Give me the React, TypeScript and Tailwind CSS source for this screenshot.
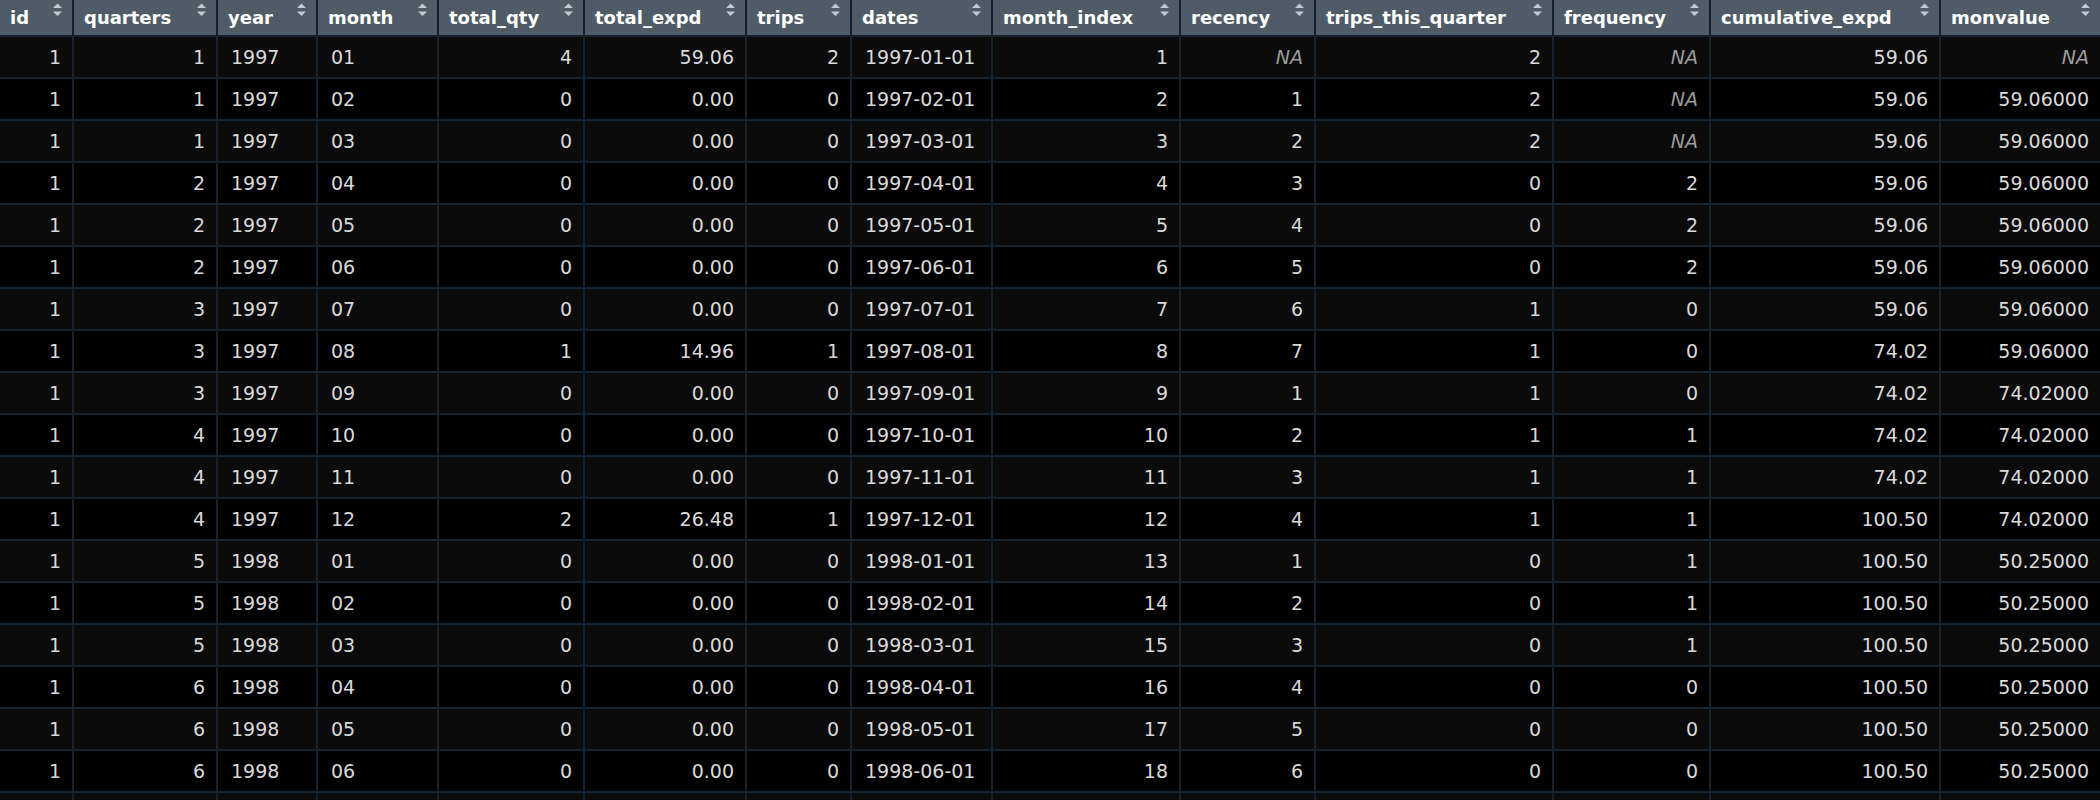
const columns = [
  { key: "id", width: "w-[74px]", align: "right" },
  { key: "quarters", width: "w-[144px]", align: "right" },
  { key: "year", width: "w-[100px]", align: "left" },
  { key: "month", width: "w-[121px]", align: "left" },
  { key: "total_qty", width: "w-[146px]", align: "right" },
  { key: "total_expd", width: "w-[162px]", align: "right" },
  { key: "trips", width: "w-[105px]", align: "right" },
  { key: "dates", width: "w-[141px]", align: "left" },
  { key: "month_index", width: "w-[188px]", align: "right" },
  { key: "recency", width: "w-[135px]", align: "right" },
  { key: "trips_this_quarter", width: "w-[238px]", align: "right" },
  { key: "frequency", width: "w-[157px]", align: "right" },
  { key: "cumulative_expd", width: "w-[230px]", align: "right" },
  { key: "monvalue", width: "w-[159px]", align: "right" },
];

// id, quarters, year, month, qty, expd, trips, month_index, recency, trips_q, freq, cum, monvalue
const raw: (string | number)[][] = [
  [1, 1, 1997, "01", 4, "59.06", 2, 1, "NA", 2, "NA", "59.06", "NA"],
  [1, 1, 1997, "02", 0, "0.00", 0, 2, 1, 2, "NA", "59.06", "59.06000"],
  [1, 1, 1997, "03", 0, "0.00", 0, 3, 2, 2, "NA", "59.06", "59.06000"],
  [1, 2, 1997, "04", 0, "0.00", 0, 4, 3, 0, 2, "59.06", "59.06000"],
  [1, 2, 1997, "05", 0, "0.00", 0, 5, 4, 0, 2, "59.06", "59.06000"],
  [1, 2, 1997, "06", 0, "0.00", 0, 6, 5, 0, 2, "59.06", "59.06000"],
  [1, 3, 1997, "07", 0, "0.00", 0, 7, 6, 1, 0, "59.06", "59.06000"],
  [1, 3, 1997, "08", 1, "14.96", 1, 8, 7, 1, 0, "74.02", "59.06000"],
  [1, 3, 1997, "09", 0, "0.00", 0, 9, 1, 1, 0, "74.02", "74.02000"],
  [1, 4, 1997, "10", 0, "0.00", 0, 10, 2, 1, 1, "74.02", "74.02000"],
  [1, 4, 1997, "11", 0, "0.00", 0, 11, 3, 1, 1, "74.02", "74.02000"],
  [1, 4, 1997, "12", 2, "26.48", 1, 12, 4, 1, 1, "100.50", "74.02000"],
  [1, 5, 1998, "01", 0, "0.00", 0, 13, 1, 0, 1, "100.50", "50.25000"],
  [1, 5, 1998, "02", 0, "0.00", 0, 14, 2, 0, 1, "100.50", "50.25000"],
  [1, 5, 1998, "03", 0, "0.00", 0, 15, 3, 0, 1, "100.50", "50.25000"],
  [1, 6, 1998, "04", 0, "0.00", 0, 16, 4, 0, 0, "100.50", "50.25000"],
  [1, 6, 1998, "05", 0, "0.00", 0, 17, 5, 0, 0, "100.50", "50.25000"],
  [1, 6, 1998, "06", 0, "0.00", 0, 18, 6, 0, 0, "100.50", "50.25000"],
];

const rows = raw.map((r) => {
  const [id, q, year, month, qty, expd, trips, mi, rec, tq, freq, cum, mon] = r;
  return [id, q, year, month, qty, expd, trips, `${year}-${month}-01`, mi, rec, tq, freq, cum, mon].map(String);
});

// the next row only peeks in at the bottom edge, no text visible yet
rows.push(columns.map(() => ""));

function SortIcon() {
  return (
    <svg width="9" height="14" viewBox="0 0 9 14" className="absolute right-[10px] top-[3px]">
      <polygon points="0,5 4.5,0.5 9,5" fill="#c3cad1" />
      <polygon points="0,8.5 4.5,13 9,8.5" fill="#c3cad1" />
    </svg>
  );
}

export default function App() {
  return (
    <div className="h-[800px] w-[2100px] overflow-hidden bg-black font-['DejaVu_Sans','Liberation_Sans',sans-serif]">
      <div className="flex bg-[#4f5b66]">
        {columns.map((c, i) => (
          <div
            key={c.key}
            className={`relative flex h-[37px] shrink-0 items-center border-b-2 border-[#14202c] pl-[10px] text-[18px] font-bold text-white ${c.width} ${
              i < columns.length - 1 ? "border-r-2" : ""
            }`}
          >
            {c.key}
            <SortIcon />
          </div>
        ))}
      </div>

      {rows.map((row, ri) => (
        <div key={ri} className={`flex ${ri % 2 === 0 ? "bg-[#0b0b0b]" : "bg-black"}`}>
          {row.map((val, ci) => {
            const col = columns[ci];
            const isNA = val === "NA";
            return (
              <div
                key={ci}
                className={`flex h-[42px] shrink-0 items-center border-b-2 border-[#15222f] px-[11px] text-[19px] ${col.width} ${
                  col.align === "right" ? "justify-end" : "justify-start pl-[13px]"
                } ${ci < columns.length - 1 ? "border-r-2" : ""} ${
                  isNA ? "italic text-[#9b9b9b]" : "text-[#dadada]"
                }`}
              >
                {val}
              </div>
            );
          })}
        </div>
      ))}
    </div>
  );
}
